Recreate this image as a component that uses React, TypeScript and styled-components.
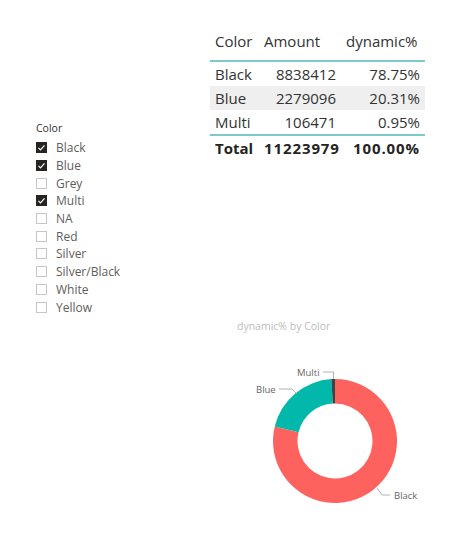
import React from 'react'
import styled, { createGlobalStyle } from 'styled-components'

const GlobalStyle = createGlobalStyle`
  html, body {
    margin: 0;
    padding: 0;
    background: #ffffff;
  }
  body {
    font-family: "Open Sans", "Noto Sans", sans-serif;
  }
`

const Page = styled.div`
  width: 474px;
  height: 553px;
  background: #ffffff;
  overflow: hidden;
`

const TopSection = styled.div`
  display: grid;
  grid-template-columns: 210px 215px;
  height: 318px;
`

const Slicer = styled.div`
  padding: 121px 0 0 36px;
  display: flex;
  flex-direction: column;
`

const SlicerTitle = styled.div`
  font-size: 10.5px;
  line-height: 14px;
  color: #333333;
  margin-bottom: 4px;
`

const SlicerItem = styled.label`
  display: flex;
  align-items: center;
  gap: 9px;
  height: 17.7px;
  font-size: 12px;
  color: #605e5c;
`

const Box = styled.span<{ checked?: boolean }>`
  width: 11px;
  height: 11px;
  box-sizing: border-box;
  border: 1px solid ${({ checked }) => (checked ? '#252423' : '#c8c6c4')};
  background: ${({ checked }) => (checked ? '#252423' : '#ffffff')};
  display: flex;
  align-items: center;
  justify-content: center;
  flex-shrink: 0;
`

const TableWrap = styled.div`
  padding-top: 25px;
`

const Table = styled.table`
  width: 215px;
  border-collapse: collapse;
  font-size: 15px;
  color: #333333;
  table-layout: fixed;
`

const HeadCell = styled.th<{ w: number }>`
  box-sizing: border-box;
  width: ${({ w }) => w}px;
  font-weight: 400;
  text-align: left;
  padding: 6px 0 9px 5px;
  line-height: 20px;
  border-bottom: 2px solid #7ccaca;
  white-space: nowrap;
`

const BodyRow = styled.tr<{ banded?: boolean }>`
  background: ${({ banded }) => (banded ? '#efefef' : 'transparent')};
`

const Cell = styled.td<{ right?: boolean; wide?: boolean }>`
  height: 24px;
  line-height: 24px;
  padding: 0 5px 0 5px;
  text-align: ${({ right }) => (right ? 'right' : 'left')};
  letter-spacing: ${({ wide }) => (wide ? '0.9px' : '0')};
  white-space: nowrap;
`

const TotalRow = styled.tr`
  border-top: 2px solid #7ccaca;
  font-weight: 700;
  color: #252423;
`

const ChartPanel = styled.div`
  display: flex;
  flex-direction: column;
`

const ChartTitle = styled.div`
  padding-left: 237px;
  font-size: 10.5px;
  line-height: 16px;
  color: #bdbdbd;
`

const DonutSvg = styled.svg`
  display: block;
  margin: 16px 0 0 240px;
`

const rows = [
  { color: 'Black', amount: '8838412', pct: '78.75%' },
  { color: 'Blue', amount: '2279096', pct: '20.31%' },
  { color: 'Multi', amount: '106471', pct: '0.95%' },
]

const slicerItems = [
  { name: 'Black', checked: true },
  { name: 'Blue', checked: true },
  { name: 'Grey' },
  { name: 'Multi', checked: true },
  { name: 'NA' },
  { name: 'Red' },
  { name: 'Silver' },
  { name: 'Silver/Black' },
  { name: 'White' },
  { name: 'Yellow' },
]

const CX = 335
const CY = 441
const R = 62
const RI = 37.5

function pt(deg: number, rad: number) {
  const a = (deg * Math.PI) / 180
  return [CX + rad * Math.sin(a), CY - rad * Math.cos(a)]
}

function arc(from: number, to: number) {
  const large = to - from > 180 ? 1 : 0
  const [x1, y1] = pt(from, R)
  const [x2, y2] = pt(to, R)
  const [x3, y3] = pt(to, RI)
  const [x4, y4] = pt(from, RI)
  return `M${x1} ${y1} A${R} ${R} 0 ${large} 1 ${x2} ${y2} L${x3} ${y3} A${RI} ${RI} 0 ${large} 0 ${x4} ${y4} Z`
}

const slices = [
  { pct: 78.75, fill: '#fd625e' },
  { pct: 20.31, fill: '#01b8aa' },
  { pct: 0.95, fill: '#374649' },
]

function Donut() {
  let start = 0
  return (
    <DonutSvg width={200} height={160} viewBox="240 350 200 160">
      {slices.map((s) => {
        const end = Math.min(360, start + (s.pct / 100) * 360)
        const d = arc(start, end)
        start = end
        return <path key={s.fill} d={d} fill={s.fill} />
      })}
      <g fill="none" stroke="#9e9e9e" strokeWidth={0.8}>
        <polyline points="323,372 333.5,372 333.5,379" />
        <polyline points="279,389 292,389 297,394" />
        <polyline points="377,488 382,495 390,495" />
      </g>
      <g fontFamily='"Open Sans", sans-serif' fontSize={9.5} fill="#666666">
        <text x={297} y={375.5}>Multi</text>
        <text x={256} y={392.5}>Blue</text>
        <text x={394} y={498.5}>Black</text>
      </g>
    </DonutSvg>
  )
}

function Check() {
  return (
    <svg width={9} height={9} viewBox="0 0 9 9">
      <polyline points="1.5,4.8 3.5,6.8 7.5,2.3" fill="none" stroke="#ffffff" strokeWidth={1.2} />
    </svg>
  )
}

export default function App() {
  return (
    <Page>
      <GlobalStyle />
      <TopSection>
        <Slicer>
          <SlicerTitle>Color</SlicerTitle>
          {slicerItems.map((it) => (
            <SlicerItem key={it.name}>
              <Box checked={it.checked}>{it.checked && <Check />}</Box>
              {it.name}
            </SlicerItem>
          ))}
        </Slicer>
        <TableWrap>
          <Table>
            <thead>
              <tr>
                <HeadCell w={49}>Color</HeadCell>
                <HeadCell w={82}>Amount</HeadCell>
                <HeadCell w={84}>dynamic%</HeadCell>
              </tr>
            </thead>
            <tbody>
              {rows.map((r, i) => (
                <BodyRow key={r.color} banded={i === 1}>
                  <Cell>{r.color}</Cell>
                  <Cell right>{r.amount}</Cell>
                  <Cell right>{r.pct}</Cell>
                </BodyRow>
              ))}
              <TotalRow>
                <Cell>Total</Cell>
                <Cell right wide>11223979</Cell>
                <Cell right wide>100.00%</Cell>
              </TotalRow>
            </tbody>
          </Table>
        </TableWrap>
      </TopSection>
      <ChartPanel>
        <ChartTitle>dynamic% by Color</ChartTitle>
        <Donut />
      </ChartPanel>
    </Page>
  )
}
